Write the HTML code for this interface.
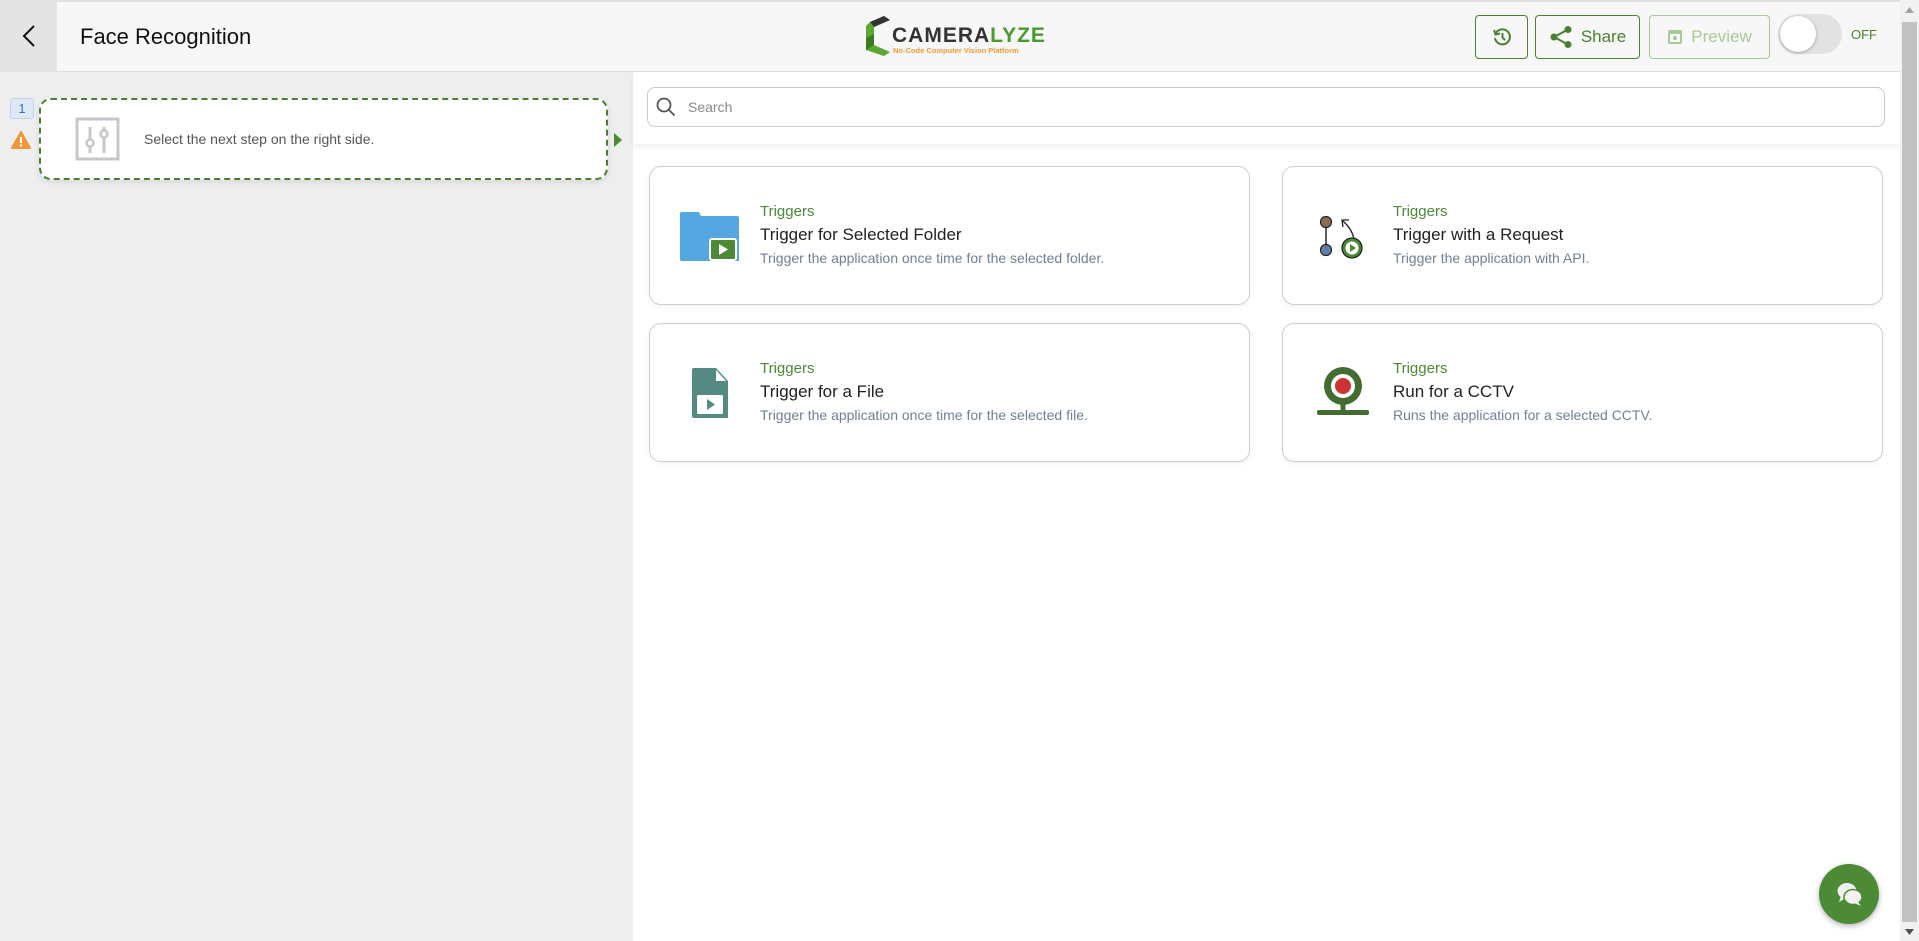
<!DOCTYPE html>
<html><head><meta charset="utf-8"><style>
*{box-sizing:border-box;margin:0;padding:0}
body{width:1919px;height:941px;overflow:hidden;font-family:"Liberation Sans",sans-serif;background:#fff;position:relative}
.abs{position:absolute}
#hdr{left:0;top:0;width:1900px;height:72px;background:#f7f7f7;border-top:2px solid #e0e0e0;border-bottom:1px solid #ddd}
#back{left:0;top:0;width:57px;height:72px;background:#e4e4e4}
#left{left:0;top:72px;width:633px;height:869px;background:#eeeeee}
.btn{border:1.5px solid #4a7f33;border-radius:4px;height:44px;top:15px;color:#4a7f33;font-size:17px;display:flex;align-items:center;justify-content:center;gap:8px;background:#f7f7f7}
.card{width:601px;height:139px;border:1px solid #cfcfcf;border-radius:12px;background:#fff;box-shadow:0 2px 6px rgba(0,0,0,.05)}
.card .t1{position:absolute;left:110px;top:36px;color:#4a8a34;font-size:15px}
.card .t2{position:absolute;left:110px;top:58px;color:#222;font-size:17px}
.card .t3{position:absolute;left:110px;top:83px;color:#70809a;font-size:14px}
.card svg{position:absolute}
</style></head><body>
<div id="hdr" class="abs"></div>
<div id="back" class="abs"><svg class="abs" style="left:22px;top:24px" width="14" height="24" viewBox="0 0 14 24"><path d="M12 2 L2 12 L12 22" fill="none" stroke="#111" stroke-width="2"/></svg></div>
<div class="abs" style="left:80px;top:24px;font-size:22px;color:#111">Face Recognition</div>
<!-- logo -->
<svg class="abs" style="left:862px;top:14px" width="30" height="44" viewBox="0 0 30 44"><path d="M8 8 L22 2 L28 6 L12 13 L12 31 L28 38 L22 42 L4 36 L4 12 Z" fill="#5aa832"/><path d="M8 8 L22 2 L28 6 L12 13 Z" fill="#333"/><path d="M4 24 L12 20 L12 31 L4 36 Z" fill="#3d7a22"/></svg>
<div class="abs" style="left:892px;top:24px;font-size:21px;font-weight:bold;letter-spacing:1px;color:#333">CAMERA<span style="color:#4a9a2e">LYZE</span></div>
<div class="abs" style="left:893px;top:46px;font-size:7.5px;color:#f19a3a;font-weight:bold">No-Code Computer Vision Platform</div>
<!-- buttons -->
<div class="abs btn" style="left:1475px;width:53px"><svg width="20" height="20" viewBox="0 0 20 20"><path d="M4 6 A7.5 7.5 0 1 1 3 11" fill="none" stroke="#4a7f33" stroke-width="2"/><path d="M2 3 L3.5 7.5 L8 6.5" fill="none" stroke="#4a7f33" stroke-width="2"/><path d="M10.5 6 V10.5 L13 13" fill="none" stroke="#4a7f33" stroke-width="2"/></svg></div>
<div class="abs btn" style="left:1535px;width:105px"><svg width="24" height="24" viewBox="0 0 24 24"><circle cx="19" cy="4.5" r="3.5" fill="#4a7f33"/><circle cx="5" cy="12" r="3.5" fill="#4a7f33"/><circle cx="19" cy="19.5" r="3.5" fill="#4a7f33"/><path d="M19 4.5 L5 12 L19 19.5" fill="none" stroke="#4a7f33" stroke-width="2"/></svg>Share</div>
<div class="abs btn" style="left:1649px;width:121px;border-color:#a8c99a;color:#a8c99a"><svg width="16" height="16" viewBox="0 0 16 16"><rect x="1" y="1" width="14" height="14" rx="2" fill="#a8c99a"/><rect x="3" y="5" width="10" height="8" fill="#f7f7f7"/><circle cx="8" cy="9" r="2" fill="#a8c99a"/></svg>Preview</div>
<div class="abs" style="left:1778px;top:14px;width:64px;height:40px;border-radius:20px;background:#e2e2e2"></div>
<div class="abs" style="left:1780px;top:16px;width:36px;height:36px;border-radius:50%;background:#fff;box-shadow:0 1px 3px rgba(0,0,0,.3)"></div>
<div class="abs" style="left:1851px;top:27px;font-size:13px;color:#4a7f33">OFF</div>
<!-- left panel -->
<div id="left" class="abs"></div>
<div class="abs" style="left:10px;top:98px;width:24px;height:21px;background:#dde9f7;border:1px solid #c3d3e6;border-radius:3px;font-size:13px;color:#3b6fb0;text-align:center;line-height:19px">1</div>
<svg class="abs" style="left:11px;top:131px" width="20" height="18" viewBox="0 0 20 18"><path d="M10 1 L19 17 L1 17 Z" fill="#f0983a" stroke="#f0983a" stroke-linejoin="round" stroke-width="2"/><rect x="9" y="6" width="2" height="6" fill="#fff"/><rect x="9" y="13.5" width="2" height="2" fill="#fff"/></svg>
<div class="abs" style="left:39px;top:98px;width:569px;height:82px;background:#fff;border:2px dashed #4a7f33;border-radius:12px;box-shadow:0 2px 6px rgba(0,0,0,.1)"></div>
<svg class="abs" style="left:75px;top:117px" width="45" height="44" viewBox="0 0 45 44"><rect x="2" y="2" width="41" height="40" fill="none" stroke="#c4c8cc" stroke-width="3"/><line x1="15" y1="10" x2="15" y2="36" stroke="#c4c8cc" stroke-width="3"/><line x1="29" y1="10" x2="29" y2="36" stroke="#c4c8cc" stroke-width="3"/><circle cx="15" cy="26" r="3.5" fill="#fff" stroke="#c4c8cc" stroke-width="2.5"/><circle cx="29" cy="17" r="3.5" fill="#fff" stroke="#c4c8cc" stroke-width="2.5"/></svg>
<div class="abs" style="left:144px;top:131px;font-size:14px;color:#555">Select the next step on the right side.</div>
<svg class="abs" style="left:614px;top:133px" width="8" height="14"><path d="M0 0 L8 7 L0 14 Z" fill="#4a8a34"/></svg>
<!-- search -->
<div class="abs" style="left:633px;top:72px;width:1267px;height:72px;background:#fff;box-shadow:0 3px 5px rgba(0,0,0,.06)"></div>
<div class="abs" style="left:647px;top:87px;width:1238px;height:40px;border:1.5px solid #c9c9c9;border-radius:8px;background:#fff"></div>
<svg class="abs" style="left:656px;top:97px" width="20" height="20" viewBox="0 0 20 20"><circle cx="8" cy="8" r="6.5" fill="none" stroke="#555" stroke-width="1.8"/><line x1="13" y1="13" x2="18.5" y2="18.5" stroke="#555" stroke-width="1.8"/></svg>
<div class="abs" style="left:688px;top:99px;font-size:14px;color:#888">Search</div>
<!-- cards -->
<div class="abs card" style="left:649px;top:166px">
<svg style="left:30px;top:45px" width="60" height="50" viewBox="0 0 60 50"><path d="M0 2 Q0 0 2 0 L19 0 L21 4 L57 4 Q59 4 59 6 L59 49 L2 49 Q0 49 0 47 Z" fill="#54a7e0"/><rect x="30" y="27" width="26" height="21" rx="2" fill="#4d8a35" stroke="#fff" stroke-width="2"/><path d="M39 32 L48 37.5 L39 43 Z" fill="#fff"/></svg>
<div class="t1">Triggers</div><div class="t2">Trigger for Selected Folder</div><div class="t3">Trigger the application once time for the selected folder.</div></div>
<div class="abs card" style="left:1282px;top:166px">
<svg style="left:35px;top:48px" width="50" height="50" viewBox="0 0 50 50"><line x1="8" y1="9" x2="8" y2="34" stroke="#222" stroke-width="1.5"/><circle cx="8" cy="7" r="5.5" fill="#8b6e52" stroke="#222" stroke-width="1.2"/><circle cx="8" cy="35" r="5.5" fill="#5e82a6" stroke="#222" stroke-width="1.2"/><path d="M36 24 Q34 14 25 6" fill="none" stroke="#222" stroke-width="1.3"/><path d="M25 12 L24 5 L31 5" fill="none" stroke="#222" stroke-width="1.3"/><circle cx="34" cy="33" r="10" fill="#4d8a35" stroke="#222" stroke-width="1.3"/><circle cx="34" cy="33" r="6.5" fill="#fff"/><path d="M32 29 L38 33 L32 37 Z" fill="#4d8a35"/></svg>
<div class="t1">Triggers</div><div class="t2">Trigger with a Request</div><div class="t3">Trigger the application with API.</div></div>
<div class="abs card" style="left:649px;top:323px">
<svg style="left:42px;top:44px" width="38" height="52" viewBox="0 0 38 52"><path d="M2 0 L24 0 L36 13 L36 50 L2 50 Q0 50 0 48 L0 2 Q0 0 2 0 Z" fill="#558a82"/><path d="M24 2 L34 13 L24 13 Z" fill="#fff"/><rect x="5" y="27" width="26" height="19" rx="1.5" fill="#fff"/><path d="M15 31 L23 36.5 L15 42 Z" fill="#558a82"/></svg>
<div class="t1">Triggers</div><div class="t2">Trigger for a File</div><div class="t3">Trigger the application once time for the selected file.</div></div>
<div class="abs card" style="left:1282px;top:323px">
<svg style="left:33px;top:42px" width="54" height="54" viewBox="0 0 54 54"><circle cx="27" cy="20" r="19" fill="#436c30"/><circle cx="27" cy="20" r="12" fill="#fff"/><circle cx="27" cy="20" r="8" fill="#cc3333"/><rect x="24.5" y="36" width="5" height="10" fill="#436c30"/><rect x="1" y="44" width="52" height="5" rx="2" fill="#436c30"/></svg>
<div class="t1">Triggers</div><div class="t2">Run for a CCTV</div><div class="t3">Runs the application for a selected CCTV.</div></div>
<!-- chat -->
<div class="abs" style="left:1819px;top:864px;width:60px;height:60px;border-radius:50%;background:#4d8a35;box-shadow:0 2px 6px rgba(0,0,0,.3)"></div>
<svg class="abs" style="left:1836px;top:882px" width="28" height="25" viewBox="0 0 28 25"><ellipse cx="11" cy="9" rx="9.5" ry="8" fill="#f2f2f2"/><path d="M5 14 L3 20 L10 16 Z" fill="#f2f2f2"/><ellipse cx="17" cy="15" rx="9" ry="7.5" fill="#f2f2f2" stroke="#4d8a35" stroke-width="1.5"/><path d="M22 20 L25 24 L18 21 Z" fill="#f2f2f2"/></svg>
<!-- scrollbar -->
<div class="abs" style="left:1900px;top:0;width:19px;height:941px;background:#f1f1f1"></div>
<div class="abs" style="left:1902px;top:22px;width:15px;height:900px;background:#c1c1c1"></div>
<svg class="abs" style="left:1905px;top:7px" width="9" height="6"><path d="M0 6 L4.5 0 L9 6Z" fill="#a3a3a3"/></svg>
<svg class="abs" style="left:1905px;top:929px" width="9" height="6"><path d="M0 0 L4.5 6 L9 0Z" fill="#505050"/></svg>
</body></html>
